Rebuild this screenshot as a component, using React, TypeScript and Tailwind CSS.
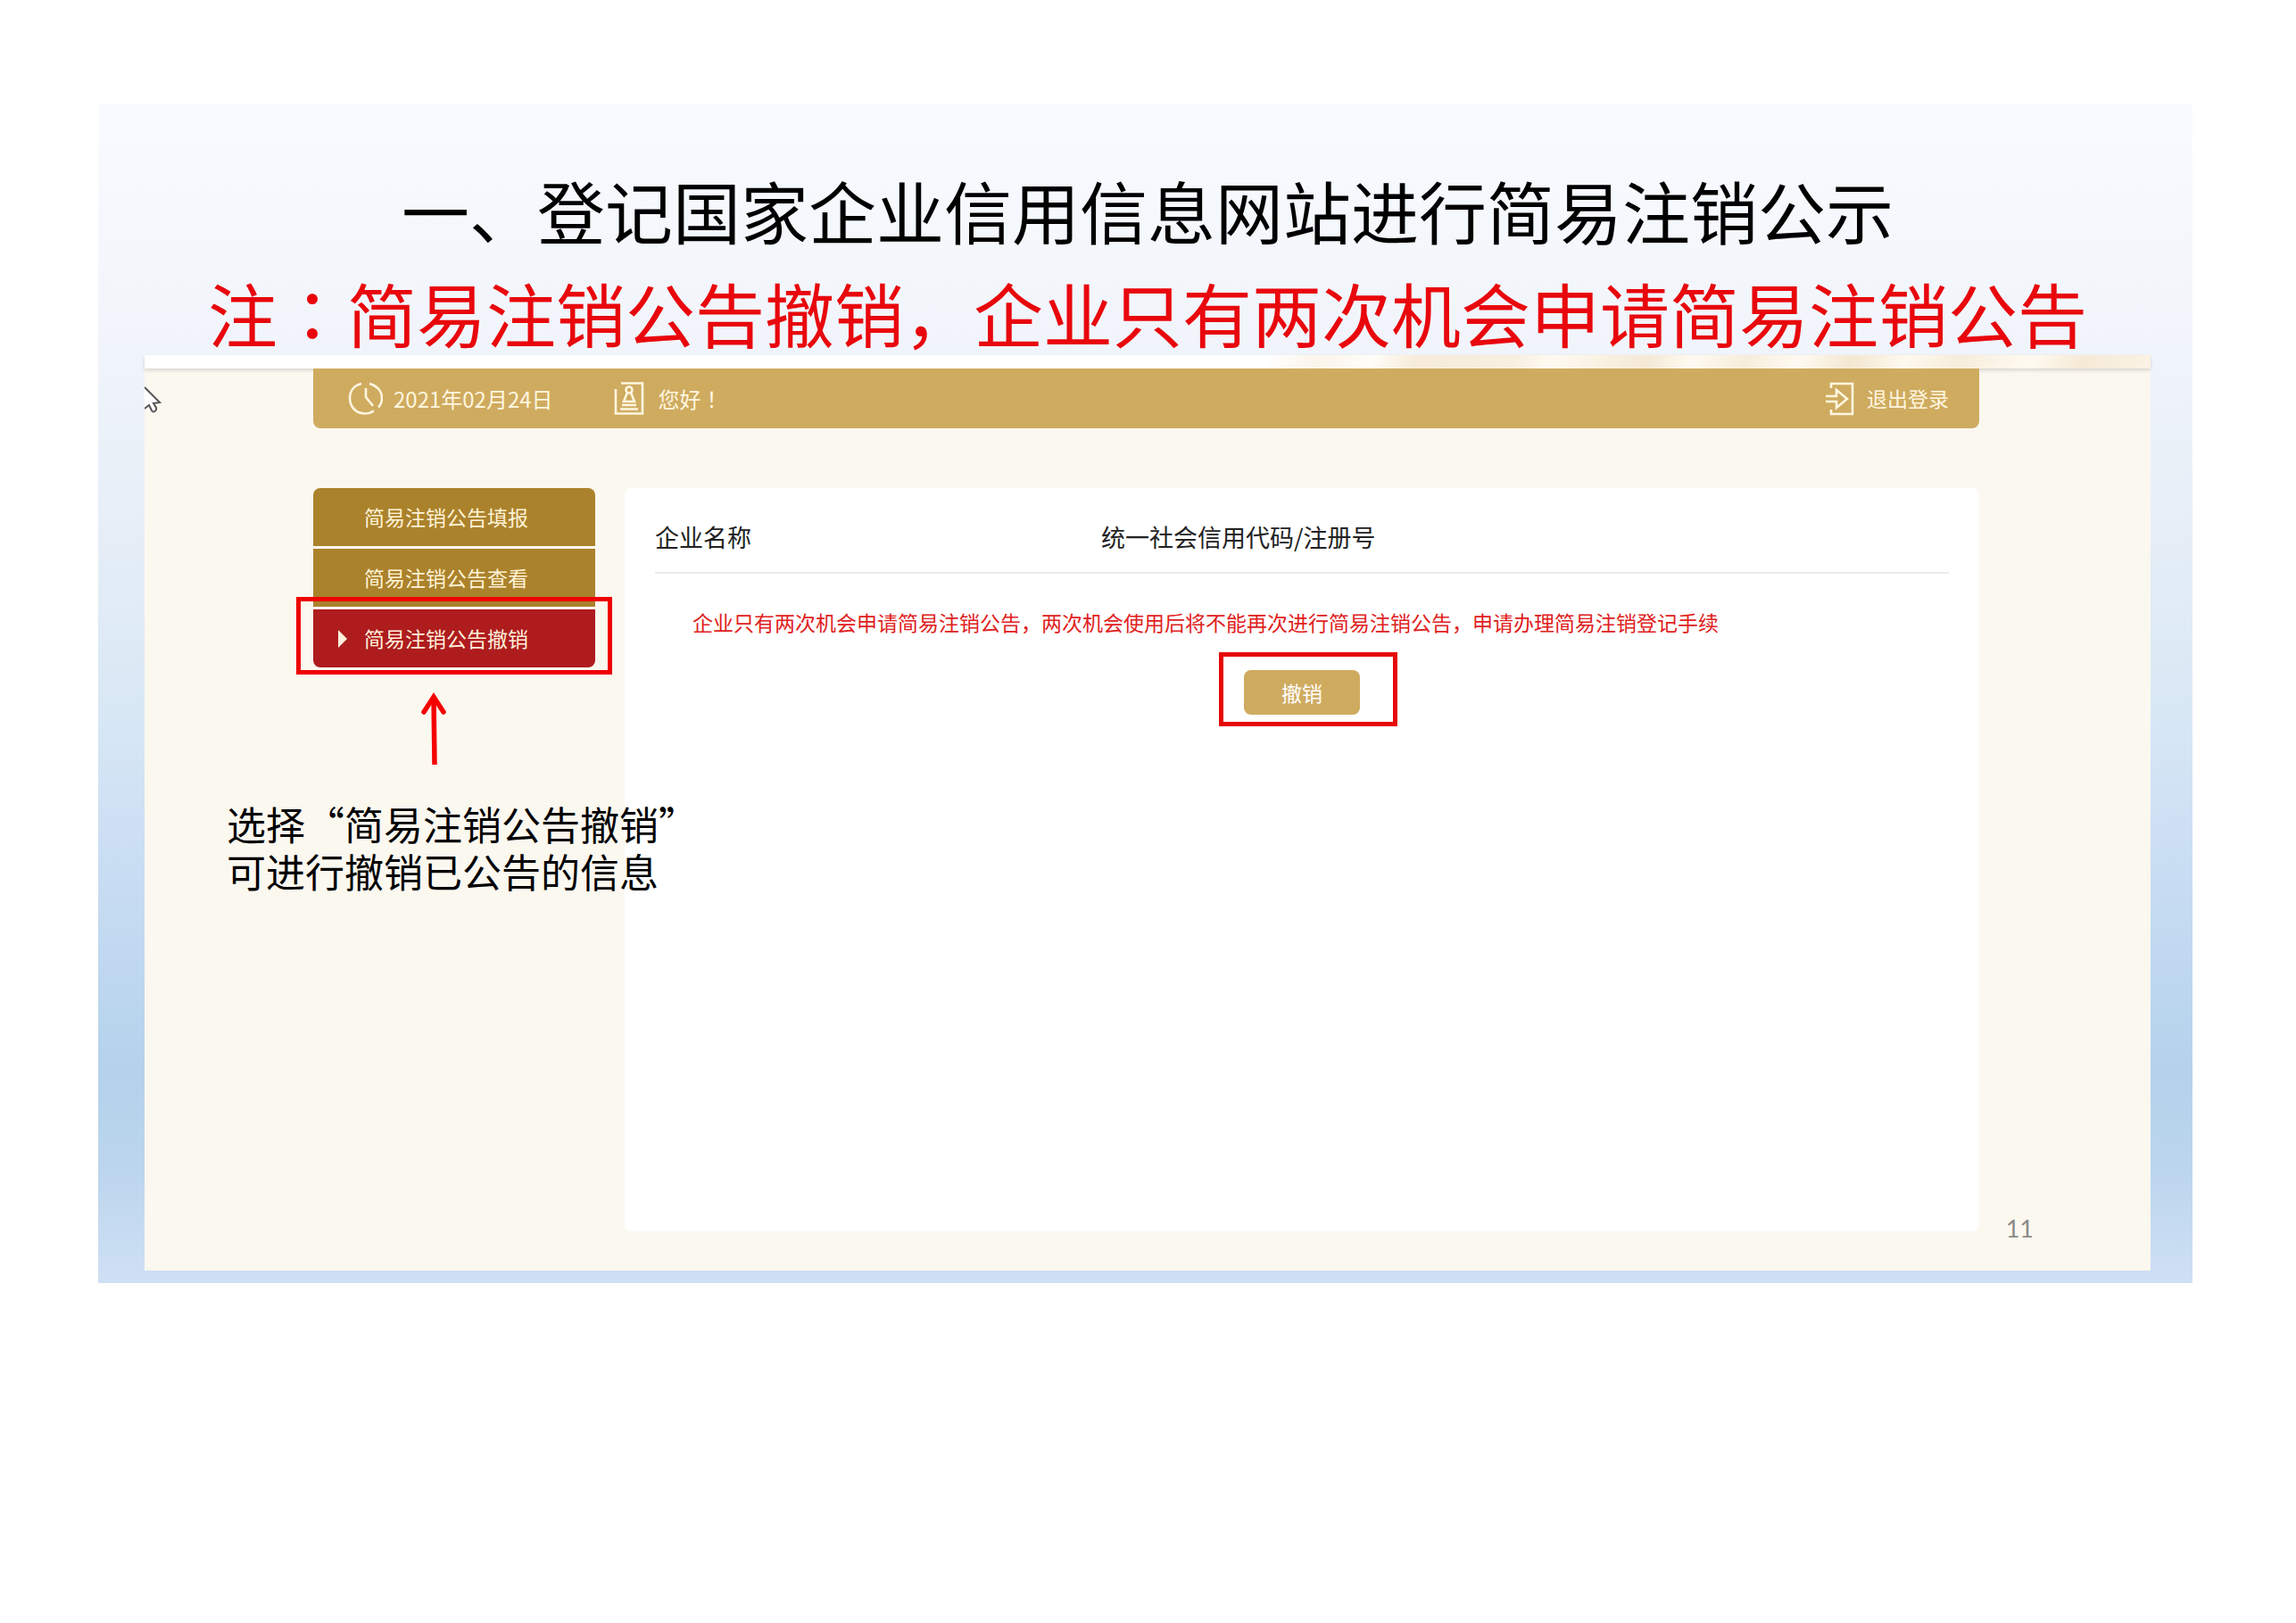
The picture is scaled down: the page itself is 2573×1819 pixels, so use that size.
import { ReactNode } from 'react';

const CJK = "font-['Noto_Sans_CJK_SC','Noto_Sans',sans-serif]";

interface MenuItem {
  label: string;
  active?: boolean;
}

const menuItems: MenuItem[] = [
  { label: '简易注销公告填报' },
  { label: '简易注销公告查看' },
  { label: '简易注销公告撤销', active: true },
];

// full-width mark centred in its cell
function Mark({ children }: { children: ReactNode }) {
  return <span className="font-['Noto_Sans_CJK_JP',sans-serif]">{children}</span>;
}

function ClockIcon() {
  return (
    <svg className="h-[37px] w-[39px]" viewBox="0 0 39 37" fill="none" stroke="currentColor" strokeWidth="2.6">
      <path d="M15 2C7 4 2 10 2 18C2 28 9 35.500 19 35.500C23 35.500 26 34.500 29 32.500" />
      <path d="M24 2C32 4 38 10 38 18C38 22 36.500 26 34 28.500" />
      <path d="M20 7V17L28 27" />
    </svg>
  );
}

function UserCardIcon() {
  return (
    <svg className="h-[37px] w-[34px]" viewBox="0 0 34 37" fill="none" stroke="currentColor" strokeWidth="2.6">
      <path d="M2 8V35.500H32V1.500H8" />
      <circle cx="17" cy="9" r="3.500" />
      <path d="M15 12L11 22H23L19 12" />
      <path d="M9 26H25M7 30.500H27" />
    </svg>
  );
}

function LogoutIcon() {
  return (
    <svg className="h-[38px] w-[33px]" viewBox="0 0 33 38" fill="none" stroke="currentColor" strokeWidth="2.6">
      <path d="M7 7V2H31V36H7V31" />
      <path d="M1 16H13V9L25 19L13 29V22H1" />
    </svg>
  );
}

function TopBar() {
  return (
    <header className="flex h-[67px] items-center justify-between rounded-b-lg bg-[#cfab60] pr-[34px] pl-[39px] text-2xl text-[#fff6df]">
      <div className="flex items-center">
        <ClockIcon />
        <time className="ml-3" dateTime="2021-02-24">2021年02月24日</time>
        <span className="ml-[68px] flex items-center gap-4">
          <UserCardIcon />
          <span>您好<Mark>！</Mark></span>
        </span>
      </div>
      <a href="#logout" className="flex items-center gap-[14px] text-[23px]">
        <LogoutIcon />
        退出登录
      </a>
    </header>
  );
}

function SideMenu() {
  return (
    <nav className="relative flex w-[316px] shrink-0 flex-col gap-[3px] self-start">
      {menuItems.map((item) => (
        <a
          key={item.label}
          href="#menu"
          className={
            item.active
              ? 'flex h-[65px] items-center rounded-b-lg bg-[#ae1c1e] pl-7 text-[23px] text-[#fff0dc]'
              : 'flex h-[65px] items-center bg-[#ab822c] pl-7 text-[23px] text-[#fff3d6] first:rounded-t-lg'
          }
        >
          <span className="w-[29px]">
            {item.active && (
              <svg className="h-5 w-[10px]" viewBox="0 0 10 20" fill="currentColor">
                <path d="M0 0L10 10L0 20Z" />
              </svg>
            )}
          </span>
          {item.label}
        </a>
      ))}

      {/* highlight and arrow on the active entry */}
      <div className="pointer-events-none absolute top-[122px] -left-[19px] h-[87px] w-[354px] border-[5px] border-[#ee0000]" />
      <svg
        className="absolute top-[228px] left-[120px] h-[84px] w-[30px]"
        viewBox="0 0 30 84"
        fill="none"
        stroke="#f50000"
        strokeWidth="5.5"
      >
        <path d="M16 82L15 6" />
        <path d="M4 23L15 6L26 23" strokeLinecap="round" />
      </svg>
      <p className="absolute top-[350px] -left-[97px] text-[44px] leading-[53px] whitespace-nowrap text-black">
        选择“简易注销公告撤销”
        <br />
        可进行撤销已公告的信息
      </p>
    </nav>
  );
}

function RevokePanel() {
  return (
    <main className="min-h-[833px] min-w-0 flex-1 rounded-lg bg-white px-[34px]">
      <div className="flex h-24 items-center border-b-2 border-[#ebebeb] pt-4 text-[27px] text-[#222222]">
        <span className="w-[500px]">企业名称</span>
        <span>统一社会信用代码/注册号</span>
      </div>
      <p className="mt-9 pl-[42px] text-[23px] leading-9 text-[#e02020]">
        企业只有两次机会申请简易注销公告，两次机会使用后将不能再次进行简易注销公告，申请办理简易注销登记手续
      </p>
      <div className="mt-9 flex justify-center">
        <div className="relative">
          <button type="button" className="h-[50px] w-[130px] rounded-lg bg-[#cfab60] text-[23px] text-white">
            撤销
          </button>
          <div className="pointer-events-none absolute -top-5 -left-7 h-[83px] w-[200px] border-[5px] border-[#e60808]" />
        </div>
      </div>
    </main>
  );
}

export default function App() {
  return (
    <div className={`${CJK} min-h-screen bg-white pt-[116px] pr-[116px] pl-[110px]`}>
      <section className="bg-[linear-gradient(to_bottom,#f8fbff_0%,#f1f5fb_20%,#e6eef7_36%,#d9e8f5_51%,#c9ddf3_65%,#b4d2ec_82%,#bbd5ed_90%,#cfe0f4_100%)] pr-[47px] pb-[14px] pl-[52px]">
        <div className="flex h-[282px] flex-col items-center justify-end whitespace-nowrap">
          <h1 className="text-[76px] leading-[134px] text-black">一、登记国家企业信用信息网站进行简易注销公示</h1>
          <h2 className="text-[78px] leading-[96px] text-[#e8070d]">
            注<Mark>：</Mark>简易注销公告撤销，企业只有两次机会申请简易注销公告
          </h2>
        </div>

        <div className="relative bg-[#fbf8f0] pb-11">
          <div className="flex h-[15px] justify-end bg-white shadow-[0_2px_4px_rgba(0,0,0,0.15)]">
            <div className="w-[990px] bg-[linear-gradient(115deg,#ffffff,#fbf5ea_6%,#fffdf9_12%,#f7ecd9_17%,#f8efdf_28%,#fffaf2_32%,#fbf3e4_37%,#f4e9d5_43%,#fffaf1_48%,#f7eddb_54%,#fffaf1_60%,#f3e7d0_66%,#fff9ee_72%,#f7eddb_78%,#fffaf1_86%,#f5ead6_92%,#fbf3e4)]" />
          </div>
          <div className="relative pr-48 pl-[189px]">
            <TopBar />
            <div className="mt-[67px] flex gap-[33px]">
              <SideMenu />
              <RevokePanel />
            </div>
          </div>

          <svg className="absolute top-[35px] left-0 h-8 w-5" viewBox="0 0 20 32" fill="white" stroke="#555555" strokeWidth="2">
            <path d="M0 1L17 18L10 19L13 24C14 28 9 30 8 27L5 21L0 25" />
          </svg>
          <span className="absolute right-[131px] bottom-[29px] font-['Lato',sans-serif] text-[27px] leading-9 text-[#8b8b86]">11</span>
        </div>
      </section>
    </div>
  );
}
